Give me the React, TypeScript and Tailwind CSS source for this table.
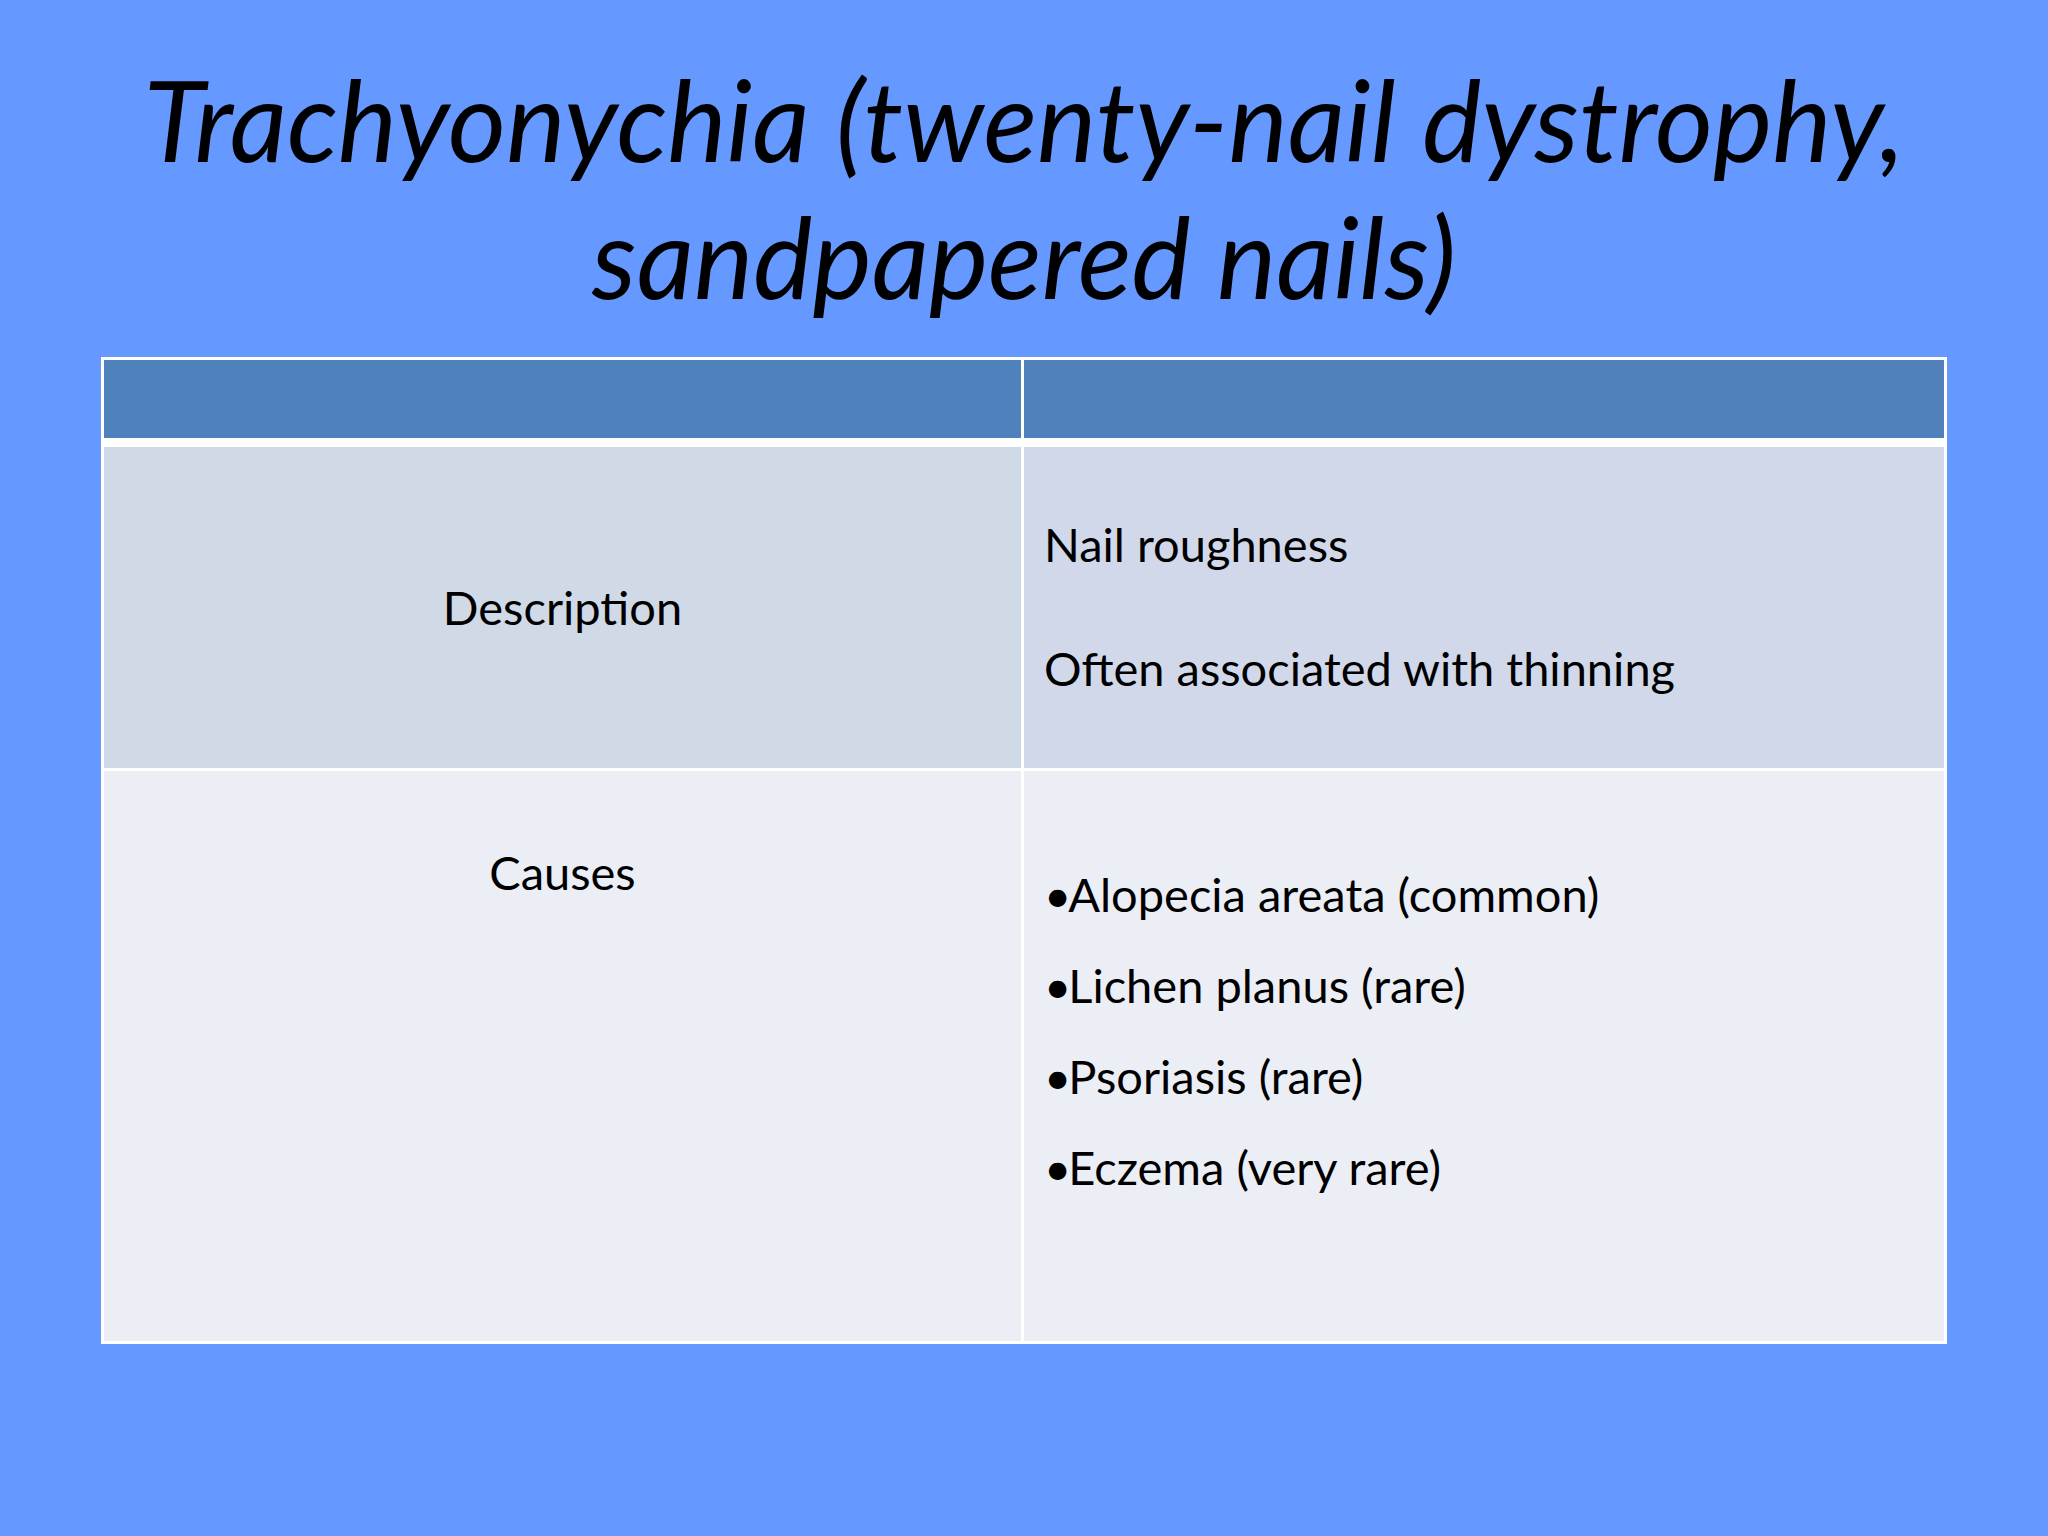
const causes = [
  "Alopecia areata (common)",
  "Lichen planus (rare)",
  "Psoriasis (rare)",
  "Eczema (very rare)",
];

export default function App() {
  return (
    <div className="w-[2048px] h-[1536px] bg-[#6699ff] font-['Lato',sans-serif] text-black overflow-hidden">
      {/* title */}
      <div className="pt-[50px] h-[357px] flex flex-col items-center">
        <h1 className="italic text-[112px] leading-[137px] text-center">
          Trachyonychia (twenty-nail dystrophy,
          <br />
          sandpapered nails)
        </h1>
      </div>

      {/* table */}
      <div className="ml-[101px] w-[1846px] h-[987px] bg-white p-[3px] flex flex-col">
        <div className="grid grid-cols-[917px_920px] gap-x-[3px] h-[78px]">
          <div className="bg-[#4f81bd]" />
          <div className="bg-[#5181bb]" />
        </div>
        <div className="grid grid-cols-[917px_920px] gap-x-[3px] h-[321px] mt-[9px]">
          <div className="bg-[#d0d9e6] flex items-center justify-center text-[47px]">
            Description
          </div>
          <div className="bg-[#d0d8e9] flex flex-col justify-center pl-[20px] text-[47px] leading-[62px] pb-[3px]">
            <p>Nail roughness</p>
            <p>&nbsp;</p>
            <p>Often associated with thinning</p>
          </div>
        </div>
        <div className="grid grid-cols-[917px_920px] gap-x-[3px] flex-1 mt-[3px]">
          <div className="bg-[#eceef6] text-center pt-[70px] text-[47px] leading-[62px]">
            Causes
          </div>
          <div className="bg-[#eceef6] pl-[20px] pt-[92px] text-[47px] leading-[62px] flex flex-col gap-[29px]">
            {causes.map((c) => (
              <p key={c}>
                <span className="mr-[-3px]">•</span>
                {c}
              </p>
            ))}
          </div>
        </div>
      </div>
    </div>
  );
}
